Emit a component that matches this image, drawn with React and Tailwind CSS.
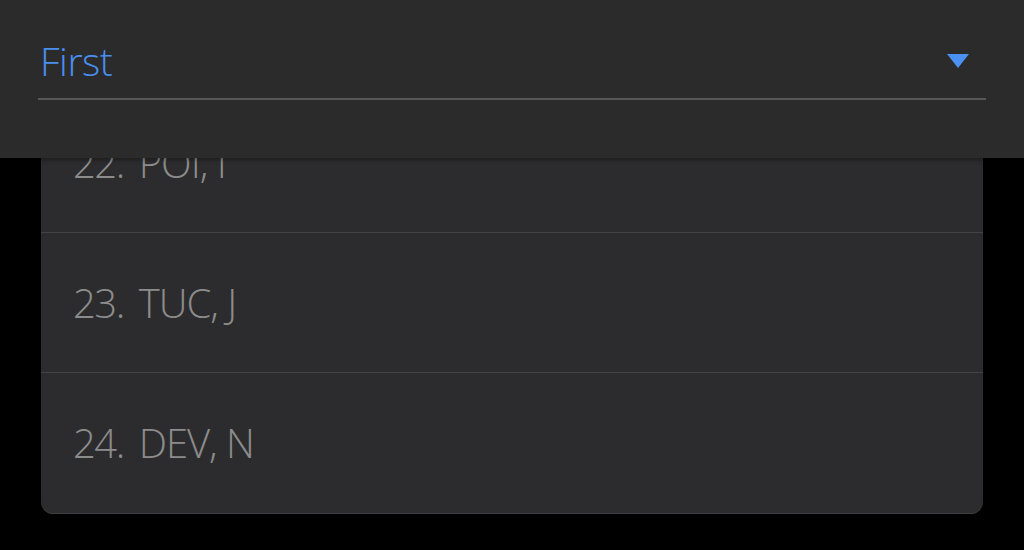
import React from 'react';

const rows = [
    { n: '22.', name: 'POI, I' },
    { n: '23.', name: 'TUC, J' },
    { n: '24.', name: 'DEV, N' },
];

const App = () => {
    return (
        <div className="w-[1024px] h-[550px] bg-black overflow-hidden" style={{ fontFamily: '"Open Sans", "Noto Sans", sans-serif' }}>

            {/* Header with select */}
            <div className="relative z-10 h-[158px] bg-[#2b2b2b] shadow-[0_2px_4px_rgba(0,0,0,0.35)] px-[38px] pt-[33px]">
                <div className="flex items-center justify-between h-[67px] border-b-2 border-[#575757] pl-[2px] pr-[17px]">
                    <span className="text-[39px] leading-none font-light tracking-[-0.5px] text-[#4a8ff0] -mt-[10px]">First</span>
                    <svg width="22" height="14" viewBox="0 0 22 14" className="-mt-[10px]">
                        <polygon points="0,0 22,0 11,14" fill="#4a91f2" />
                    </svg>
                </div>
            </div>

            {/* List card */}
            <div className="-mt-[65px] mx-[41px] w-[942px] bg-[#2c2c2e] rounded-b-[12px] border-b border-[#3e3e40]">
                {rows.map((r, i) => (
                    <div
                        key={r.n}
                        className={`h-[140px] flex items-center pl-[32px] text-[40px] font-light tracking-[-1px] text-[#8c8c8c] ${i < rows.length - 1 ? 'border-b border-[#444446]' : ''}`}
                    >
                        <span className="tracking-[-1.5px]">{r.n}</span>
                        <span className="ml-[15px]">{r.name}</span>
                    </div>
                ))}
            </div>
        </div>
    );
};

export default App;
